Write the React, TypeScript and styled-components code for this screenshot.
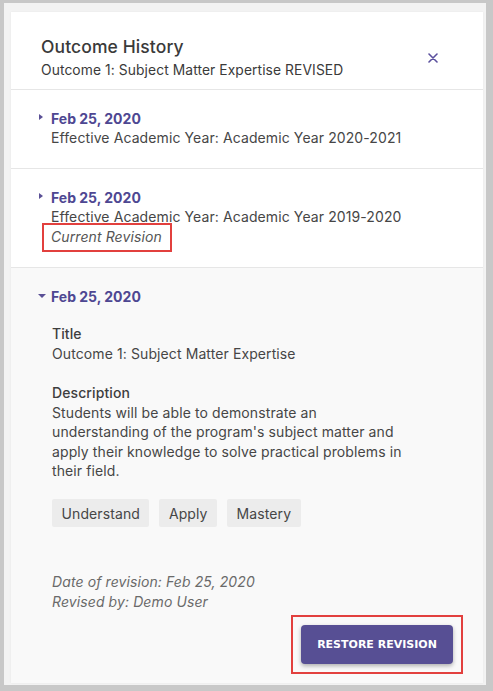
import React from 'react';
import styled, { createGlobalStyle } from 'styled-components';

const GlobalStyle = createGlobalStyle`
  html, body {
    margin: 0;
    padding: 0;
    height: 100%;
  }
  body {
    font-family: 'Inter', 'Liberation Sans', sans-serif;
    background: #c8c8c8;
  }
  #root {
    height: 100%;
  }
`;

interface Revision {
  date: string;
  academicYear: string;
  current?: boolean;
}

const revisions: Revision[] = [
  { date: 'Feb 25, 2020', academicYear: 'Academic Year 2020-2021' },
  { date: 'Feb 25, 2020', academicYear: 'Academic Year 2019-2020', current: true },
];

const levels = ['Understand', 'Apply', 'Mastery'];

export default function App() {
  return (
    <>
      <GlobalStyle />
      <Page>
        <Frame>
          <Panel>
            <Header>
              <HeaderText>
                <Title>Outcome History</Title>
                <Subtitle>Outcome 1: Subject Matter Expertise REVISED</Subtitle>
              </HeaderText>
              <CloseButton aria-label="Close">
                <svg width="10" height="10" viewBox="0 0 10 10">
                  <path
                    d="M1 1 L9 9 M9 1 L1 9"
                    stroke="#5b509e"
                    strokeWidth="1.6"
                    strokeLinecap="round"
                  />
                </svg>
              </CloseButton>
            </Header>

            {revisions.map((rev, i) => (
              <RevisionRow key={i}>
                <DateLine>
                  <Caret open={false} />
                  <DateText>{rev.date}</DateText>
                </DateLine>
                <RowBody>
                  <Line>Effective Academic Year: {rev.academicYear}</Line>
                  {rev.current && <CurrentTag>Current Revision</CurrentTag>}
                </RowBody>
              </RevisionRow>
            ))}

            <Expanded>
              <DateLine>
                <Caret open />
                <DateText>Feb 25, 2020</DateText>
              </DateLine>
              <Details>
                <Field>
                  <FieldLabel>Title</FieldLabel>
                  <Line>Outcome 1: Subject Matter Expertise</Line>
                </Field>
                <Field>
                  <FieldLabel>Description</FieldLabel>
                  <Paragraph>
                    Students will be able to demonstrate an understanding of the
                    program's subject matter and apply their knowledge to solve
                    practical problems in their field.
                  </Paragraph>
                </Field>
                <Chips>
                  {levels.map(l => (
                    <Chip key={l}>{l}</Chip>
                  ))}
                </Chips>
                <Meta>
                  <div>Date of revision: Feb 25, 2020</div>
                  <div>Revised by: Demo User</div>
                </Meta>
              </Details>
              <Footer>
                <Highlight>
                  <RestoreButton>RESTORE REVISION</RestoreButton>
                </Highlight>
              </Footer>
            </Expanded>
          </Panel>
        </Frame>
      </Page>
    </>
  );
}

/*
 ** frame
 */
const Page = styled.div`
  box-sizing: border-box;
  height: 100%;
  padding: 3px 7px 6px 4px;
  display: flex;
`;

const Frame = styled.div`
  flex: 1;
  display: flex;
  background: #f3f3f3;
  padding: 9px 3px 2px 7px;
`;

const Panel = styled.div`
  flex: 1;
  display: flex;
  flex-direction: column;
  background: #ffffff;
  box-shadow: 0 0 2px rgba(0, 0, 0, 0.06);
  color: #464646;
  letter-spacing: 0.1px;
`;

/*
 ** header
 */
const Header = styled.div`
  display: flex;
  justify-content: space-between;
  align-items: center;
  padding: 24px 45px 10px 30px;
  border-bottom: 1px solid #e6e6e6;
`;

const HeaderText = styled.div`
  display: flex;
  flex-direction: column;
  gap: 3px;
`;

const Title = styled.div`
  font-size: 17.5px;
  line-height: 22px;
  font-weight: 500;
  color: #3a3a3a;
`;

const Subtitle = styled.div`
  font-size: 13.8px;
  line-height: 18px;
  color: #3a3a3a;
`;

const CloseButton = styled.button`
  border: none;
  background: none;
  padding: 0;
  display: flex;
  cursor: pointer;
`;

/*
 ** revisions
 */
const RevisionRow = styled.div`
  padding: 18px 30px 20px;
  border-bottom: 1px solid #e6e6e6;
`;

const DateLine = styled.div`
  display: flex;
  align-items: center;
  height: 20px;
`;

const Caret = styled.span<{ open: boolean }>`
  width: 10px;
  display: flex;
  align-items: center;
  &::before {
    content: '';
    display: block;
    ${props =>
      props.open
        ? `border-left: 4px solid transparent;
           border-right: 4px solid transparent;
           border-top: 4px solid #5a5096;
           margin-left: -3px;`
        : `border-top: 3.5px solid transparent;
           border-bottom: 3.5px solid transparent;
           border-left: 4px solid #5a5096;
           margin-top: -3px;
           margin-left: -2px;`}
  }
`;

const DateText = styled.span`
  font-size: 14px;
  font-weight: 700;
  color: #4e4792;
  letter-spacing: 0;
`;

const RowBody = styled.div`
  padding-left: 10px;
`;

const Line = styled.div`
  font-size: 14px;
  line-height: 20px;
`;

const CurrentTag = styled.div`
  width: fit-content;
  font-size: 14px;
  line-height: 20px;
  font-style: italic;
  color: #555;
  padding: 2px 8px 3px 7px;
  margin: -4px 0 -5px -9px;
  border: 2px solid #e2403e;
`;

/*
 ** expanded revision
 */
const Expanded = styled.div`
  flex: 1;
  display: flex;
  flex-direction: column;
  background: #f9f9f9;
  padding: 18px 30px 19px;
`;

const Details = styled.div`
  padding: 18px 0 0 11px;
  display: flex;
  flex-direction: column;
  gap: 19px;
`;

const Field = styled.div`
  display: flex;
  flex-direction: column;
`;

const FieldLabel = styled.div`
  font-size: 14px;
  line-height: 20px;
  font-weight: 500;
  color: #3e3e3e;
`;

const Paragraph = styled.div`
  max-width: 362px;
  font-size: 14px;
  line-height: 19.3px;
`;

const Chips = styled.div`
  display: flex;
  gap: 10px;
`;

const Chip = styled.span`
  background: #ececec;
  border-radius: 2px;
  height: 28px;
  padding: 0 9.5px;
  display: flex;
  align-items: center;
  font-size: 14px;
  color: #464646;
`;

const Meta = styled.div`
  margin-top: 26px;
  font-size: 14px;
  line-height: 20px;
  font-style: italic;
  color: #6a6a6a;
`;

const Footer = styled.div`
  margin-top: auto;
  display: flex;
  justify-content: flex-end;
`;

const Highlight = styled.div`
  padding: 8px;
  margin: -10px -10px -10px 0;
  border: 2px solid #e2403e;
`;

const RestoreButton = styled.button`
  width: 152px;
  height: 39px;
  border: none;
  border-radius: 4px;
  background: #574f94;
  color: #ffffff;
  font-family: 'DejaVu Sans', 'Liberation Sans', sans-serif;
  font-size: 11px;
  font-weight: 700;
  letter-spacing: 0;
  box-shadow: 0 2px 4px rgba(0, 0, 0, 0.3);
  cursor: pointer;
`;
